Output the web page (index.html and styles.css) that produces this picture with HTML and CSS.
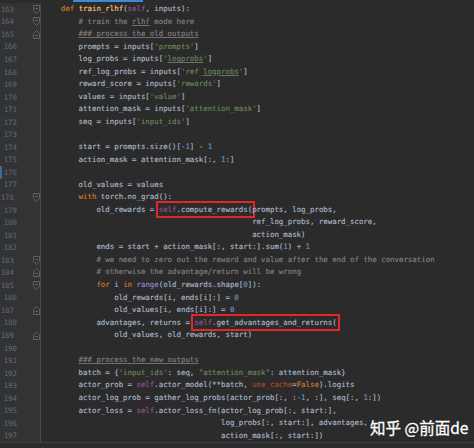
FILE: index.html
```html
<!DOCTYPE html>
<html>
<head lang="en">
  <meta charset="UTF-8">
  <title>train_rlhf</title>
  <link rel="stylesheet" href="styles.css">
</head>
<body>
<div class="tab-bar"><div class="tab-active"></div></div>
<div class="editor">
  <!-- 行号 + 折叠标记 -->
  <div class="gutter">
    <div class="ln"><span class="num">163</span><span class="fold"><svg width="7" height="9" viewBox="0 0 7 9"><path d="M0.5 0.5H6.5V5.5L3.5 8.5L0.5 5.5Z"/><path d="M2 3.5H5"/></svg></span></div>
    <div class="ln"><span class="num">164</span><span class="fold"><svg width="7" height="9" viewBox="0 0 7 9"><path d="M0.5 0.5H6.5V5.5L3.5 8.5L0.5 5.5Z"/><path d="M2 3.5H5"/></svg></span></div>
    <div class="ln"><span class="num">165</span><span class="fold"><svg width="7" height="9" viewBox="0 0 7 9"><path d="M0.5 8.5H6.5V3.5L3.5 0.5L0.5 3.5Z"/><path d="M2 5.5H5"/></svg></span></div>
    <div class="ln"><span class="num">166</span></div>
    <div class="ln"><span class="num">167</span></div>
    <div class="ln"><span class="num">168</span></div>
    <div class="ln"><span class="num">169</span></div>
    <div class="ln"><span class="num">170</span></div>
    <div class="ln"><span class="num">171</span></div>
    <div class="ln"><span class="num">172</span></div>
    <div class="ln"><span class="num">173</span></div>
    <div class="ln"><span class="num">174</span></div>
    <div class="ln"><span class="num">175</span></div>
    <div class="ln changed"><span class="num">176</span></div>
    <div class="ln"><span class="num">177</span></div>
    <div class="ln"><span class="num">178</span><span class="fold"><svg width="7" height="9" viewBox="0 0 7 9"><path d="M0.5 0.5H6.5V5.5L3.5 8.5L0.5 5.5Z"/><path d="M2 3.5H5"/></svg></span></div>
    <div class="ln"><span class="num">179</span></div>
    <div class="ln"><span class="num">180</span></div>
    <div class="ln"><span class="num">181</span></div>
    <div class="ln"><span class="num">182</span></div>
    <div class="ln"><span class="num">183</span><span class="fold"><svg width="7" height="9" viewBox="0 0 7 9"><path d="M0.5 0.5H6.5V5.5L3.5 8.5L0.5 5.5Z"/><path d="M2 3.5H5"/></svg></span></div>
    <div class="ln"><span class="num">184</span><span class="fold"><svg width="7" height="9" viewBox="0 0 7 9"><path d="M0.5 8.5H6.5V3.5L3.5 0.5L0.5 3.5Z"/><path d="M2 5.5H5"/></svg></span></div>
    <div class="ln"><span class="num">185</span><span class="fold"><svg width="7" height="9" viewBox="0 0 7 9"><path d="M0.5 0.5H6.5V5.5L3.5 8.5L0.5 5.5Z"/><path d="M2 3.5H5"/></svg></span></div>
    <div class="ln"><span class="num">186</span></div>
    <div class="ln"><span class="num">187</span><span class="fold"><svg width="7" height="9" viewBox="0 0 7 9"><path d="M0.5 8.5H6.5V3.5L3.5 0.5L0.5 3.5Z"/><path d="M2 5.5H5"/></svg></span></div>
    <div class="ln"><span class="num">188</span></div>
    <div class="ln"><span class="num">189</span><span class="fold"><svg width="7" height="9" viewBox="0 0 7 9"><path d="M0.5 8.5H6.5V3.5L3.5 0.5L0.5 3.5Z"/><path d="M2 5.5H5"/></svg></span></div>
    <div class="ln"><span class="num">190</span></div>
    <div class="ln"><span class="num">191</span></div>
    <div class="ln"><span class="num">192</span></div>
    <div class="ln"><span class="num">193</span></div>
    <div class="ln"><span class="num">194</span></div>
    <div class="ln"><span class="num">195</span></div>
    <div class="ln"><span class="num">196</span></div>
    <div class="ln"><span class="num">197</span></div>
  </div>
  <!-- 代码区 -->
  <div class="code">
<div class="line">    <span class="kw">def</span> <span class="fn">train_rlhf</span>(<span class="self">self</span>, inputs):</div>
<div class="line">        <span class="cm"># train the <u>rlhf</u> mode here</span></div>
<div class="line">        <span class="cm"><u>### process the old outputs</u></span></div>
<div class="line">        prompts = inputs[<span class="str">'prompts'</span>]</div>
<div class="line">        log_probs = inputs[<span class="str">'<u>logprobs</u>'</span>]</div>
<div class="line">        ref_log_probs = inputs[<span class="str">'ref_<u>logprobs</u>'</span>]</div>
<div class="line">        reward_score = inputs[<span class="str">'rewards'</span>]</div>
<div class="line">        values = inputs[<span class="str">'value'</span>]</div>
<div class="line">        attention_mask = inputs[<span class="str">'attention_mask'</span>]</div>
<div class="line">        seq = inputs[<span class="str">'input_ids'</span>]</div>
<div class="line"></div>
<div class="line">        start = prompts.size()[<span class="nb">-1</span>] - <span class="nb">1</span></div>
<div class="line">        action_mask = attention_mask[:, <span class="nb">1</span>:]</div>
<div class="line"></div>
<div class="line">        old_values = values</div>
<div class="line">        <span class="kw">with</span> torch.no_grad():</div>
<div class="line">            old_rewards = <span class="box"><span class="self">self</span>.compute_rewards(</span>prompts, log_probs,</div>
<div class="line">                                               ref_log_probs, reward_score,</div>
<div class="line">                                               action_mask)</div>
<div class="line">            ends = start + action_mask[:, start:].sum(<span class="nb">1</span>) + <span class="nb">1</span></div>
<div class="line">            <span class="cm"># we need to zero out the reward and value after the end of the conversation</span></div>
<div class="line">            <span class="cm"># otherwise the advantage/return will be wrong</span></div>
<div class="line">            <span class="kw">for</span> i <span class="kw">in</span> <span class="bi">range</span>(old_rewards.shape[<span class="nb">0</span>]):</div>
<div class="line">                old_rewards[i, ends[i]:] = <span class="nb">0</span></div>
<div class="line">                old_values[i, ends[i]:] = <span class="nb">0</span></div>
<div class="line">            advantages, returns = <span class="box"><span class="self">self</span>.get_advantages_and_returns(</span></div>
<div class="line">                old_values, old_rewards, start)</div>
<div class="line"></div>
<div class="line">        <span class="cm"><u>### process the new outputs</u></span></div>
<div class="line">        batch = {<span class="str">'input_ids'</span>: seq, <span class="str">"attention_mask"</span>: attention_mask}</div>
<div class="line">        actor_prob = <span class="self">self</span>.actor_model(**batch, <span class="kwarg">use_cache</span>=<span class="kw">False</span>).logits</div>
<div class="line">        actor_log_prob = gather_log_probs(actor_prob[:, :<span class="nb">-1</span>, :], seq[:, <span class="nb">1</span>:])</div>
<div class="line">        actor_loss = <span class="self">self</span>.actor_loss_fn(actor_log_prob[:, start:],</div>
<div class="line">                                        log_probs[:, start:], advantages,</div>
<div class="line">                                        action_mask[:, start:])</div>
  </div>
</div>
<div class="scroll-h"></div>
<div class="watermark">知乎 @前面de</div><!--水印-->
</body>
</html>
```

FILE: styles.css
```css
body {
  margin: 0px;
  width: 474px;
  height: 448px;
  overflow: hidden;
  position: relative;
  background: #2b2b2b;
  color: #a9b7c6;
  font-family: "DejaVu Sans Mono", "Liberation Mono", monospace;
  font-size: 7.4px;
}

.tab-bar {
  height: 2px;
}

.tab-active {
  margin-left: 73px;
  width: 70px;
  height: 2px;
  background: #3f8bd3;
}

.editor {
  display: flex;
  padding-top: 1px;
}

.gutter {
  width: 40px;
  background: #313335;
  border-right: #45484b solid 1px;
  color: #676a6d;
}

.ln {
  display: flex;
  align-items: center;
  height: 12.55px;
}

.ln.changed {
  box-shadow: inset 2px 0px 0px #3b6a99;
}

.num {
  width: 17px;
  text-align: right;
}

.fold {
  display: flex;
  margin-left: 19px;
  width: 7px;
  height: 9px;
}

.fold svg path {
  fill: #313335;
  stroke: #5e6164;
  stroke-width: 1px;
}

.code {
  flex: 1;
  padding-left: 2px;
  -webkit-text-stroke: 0.15px currentColor; /* 截图里字偏粗 */
}

.line {
  height: 12.55px;
  line-height: 12.55px;
  white-space: pre;
}

.kw {
  color: #cc7832;
}

.fn {
  color: #ffc66d;
}

.self {
  color: #94558d;
}

.str {
  color: #6a8759;
}

.nb {
  color: #6897bb;
}

.cm {
  color: #808080;
}

.bi {
  color: #8888c6;
}

.kwarg {
  color: #aa4926;
}

u {
  text-decoration: underline;
  text-decoration-color: #6f7173;
  text-underline-offset: 1px;
}

/* 红框标注 */
.box {
  border: #e0282c solid 2px;
  padding: 2px 1px;
  margin: 0px -3px;
}

.scroll-h {
  height: 6px;
  border-top: #3c3f41 solid 1px;
}

.watermark {
  position: absolute;
  left: 370px;
  top: 420px;
  color: #ffffff;
  font-family: "Noto Sans CJK SC", "Noto Sans", sans-serif;
  font-size: 15.5px;
  line-height: 1;
  -webkit-text-stroke: 0.3px #ffffff;
  text-shadow: 0px 0px 2px rgba(0, 0, 0, 0.4);
  white-space: nowrap;
}
```
